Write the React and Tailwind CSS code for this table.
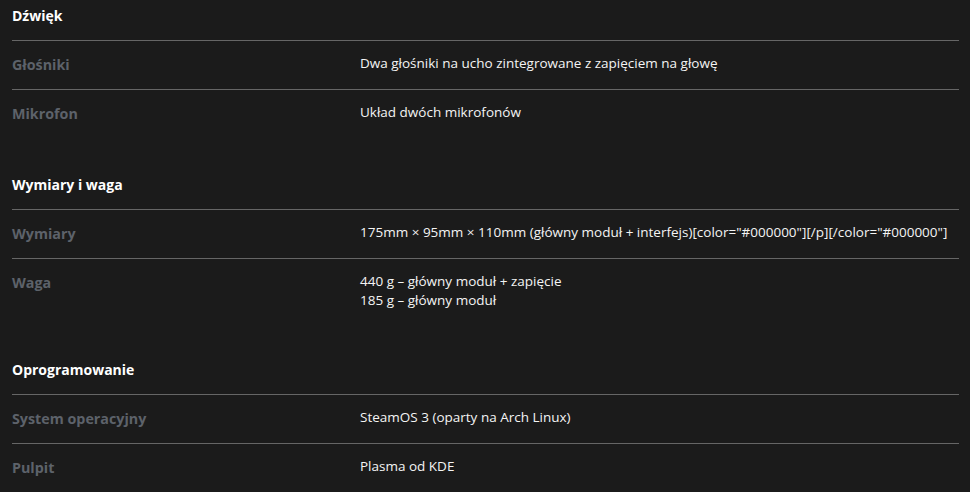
import React from "react";

const sections = [
  {
    title: "Dźwięk",
    rows: [
      { label: "Głośniki", value: ["Dwa głośniki na ucho zintegrowane z zapięciem na głowę"] },
      { label: "Mikrofon", value: ["Układ dwóch mikrofonów"] },
    ],
  },
  {
    title: "Wymiary i waga",
    rows: [
      {
        label: "Wymiary",
        value: ['175mm × 95mm × 110mm (główny moduł + interfejs)[color="#000000"][/p][/color="#000000"]'],
      },
      { label: "Waga", value: ["440 g – główny moduł + zapięcie", "185 g – główny moduł"] },
    ],
  },
  {
    title: "Oprogramowanie",
    rows: [
      { label: "System operacyjny", value: ["SteamOS 3 (oparty na Arch Linux)"] },
      { label: "Pulpit", value: ["Plasma od KDE"] },
    ],
  },
];

const Section = ({ title, rows }) => (
  <section className="mb-[31px]">
    <h3 className="pt-[6px] pb-[14px] text-[14px] leading-[20px] font-bold text-white border-b border-[#666666]">
      {title}
    </h3>
    {rows.map((row, i) => (
      <div
        key={row.label}
        className={
          "flex items-start py-[13px] " +
          (i < rows.length - 1 ? "border-b border-[#666666]" : "")
        }
      >
        <div className="w-[348px] shrink-0 text-[14.3px] leading-[22px] font-bold text-[#5d626a]">
          {row.label}
        </div>
        <div className="text-[13.5px] leading-[19px] text-[#f4f4f4]">
          {row.value.map((line) => (
            <div key={line}>{line}</div>
          ))}
        </div>
      </div>
    ))}
  </section>
);

export default function App() {
  return (
    <div
      className="min-h-screen bg-[#1b1b1b] pl-3 pr-[11px]"
      style={{ fontFamily: '"Open Sans", "Noto Sans", Arial, sans-serif' }}
    >
      {sections.map((s) => (
        <Section key={s.title} {...s} />
      ))}
    </div>
  );
}
